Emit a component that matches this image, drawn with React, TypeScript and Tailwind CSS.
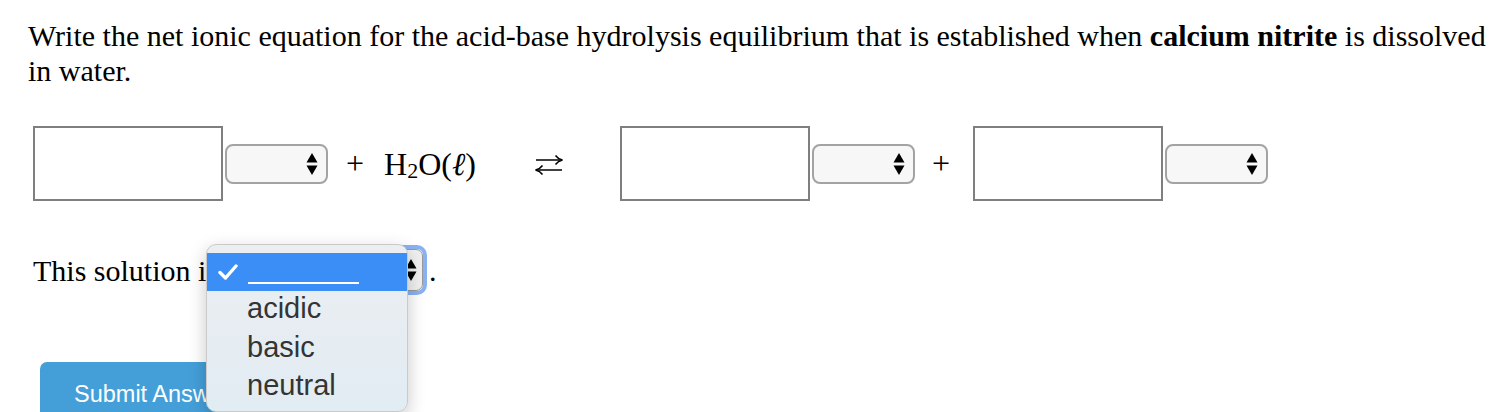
import React from 'react'

const serif = { fontFamily: '"Liberation Serif", "Times New Roman", serif' }
const sans = { fontFamily: '"Liberation Sans", Arial, sans-serif' }

function Arrows() {
  return (
    <svg width="12" height="24" viewBox="0 0 12 24" className="block">
      <path d="M6 1 L11.5 10.5 L0.5 10.5 Z" fill="#000" />
      <path d="M6 23 L11.5 13.5 L0.5 13.5 Z" fill="#000" />
    </svg>
  )
}

function StateSelect() {
  return (
    <div className="flex h-[40px] w-[103px] items-center justify-end rounded-[8px] border-2 border-[#a3a3a3] bg-[#f7f7f7] pr-[8px]">
      <Arrows />
    </div>
  )
}

function EntryBox() {
  return <div className="h-[75px] w-[190px] border-2 border-[#7f7f7f] bg-white" />
}

function Plus() {
  return <span className="text-[32px] leading-none">+</span>
}

function Equilibrium() {
  return (
    <svg width="30" height="22" viewBox="0 0 30 22" className="block">
      <path d="M2 6 H27" stroke="#000" strokeWidth="1.5" fill="none" />
      <path d="M21.5 1.5 Q24 5 28.5 6 Q24 7 21.5 10.5" stroke="#000" strokeWidth="1.5" fill="none" />
      <path d="M28 16 H3" stroke="#000" strokeWidth="1.5" fill="none" />
      <path d="M8.5 11.5 Q6 15 1.5 16 Q6 17 8.5 20.5" stroke="#000" strokeWidth="1.5" fill="none" />
    </svg>
  )
}

export default function App() {
  return (
    <div className="relative h-[412px] w-[1496px] overflow-hidden bg-white text-black" style={serif}>
      <p className="pl-[28px] pt-[18px] pr-[8px] text-[30px] leading-[35px]">
        Write the net ionic equation for the acid-base hydrolysis equilibrium that is established when{' '}
        <b>calcium nitrite</b> is dissolved in water.
      </p>

      {/* equation row */}
      <div className="mt-[38px] flex items-center pl-[33px]">
        <EntryBox />
        <div className="ml-[2px]">
          <StateSelect />
        </div>
        <span className="ml-[18px]">
          <Plus />
        </span>
        <span className="ml-[20px] text-[32px] leading-none">
          H<sub className="relative top-[3px] text-[22px]">2</sub>O(<i>ℓ</i>)
        </span>
        <span className="ml-[58px] mt-[2px]">
          <Equilibrium />
        </span>
        <div className="ml-[56px]">
          <EntryBox />
        </div>
        <div className="ml-[2px]">
          <StateSelect />
        </div>
        <span className="ml-[17px]">
          <Plus />
        </span>
        <div className="ml-[23px]">
          <EntryBox />
        </div>
        <div className="ml-[2px]">
          <StateSelect />
        </div>
      </div>

      {/* acidity row */}
      <div className="mt-[44px] flex items-center pl-[33px] text-[30px]">
        <span>This solution is</span>
        <div className="relative ml-[6px] rounded-[10px] border-[4px] border-[#8ab2f2]">
          <div className="flex h-[42px] w-[195px] items-center justify-end rounded-[7px] border border-[#9a9a9a] bg-[#f0f0f0] pr-[5px]">
            <Arrows />
          </div>
          {/* open menu */}
          <div
            className="absolute left-[-22px] top-[-5px] z-10 h-[168px] w-[202px] overflow-hidden rounded-[10px] border border-[#cacaca] bg-gradient-to-b from-[#eceef1] to-[#e1ecf3] shadow-[0_6px_18px_rgba(0,0,0,0.22)]"
            style={sans}
          >
            <div className="mt-[8px] flex h-[38px] items-center bg-[#3a8ef5] pl-[11px]">
              <svg width="20" height="16" viewBox="0 0 20 16" className="block">
                <path d="M2 8.5 L7.5 14 L18 2" stroke="#fff" strokeWidth="3.4" fill="none" strokeLinecap="round" strokeLinejoin="round" />
              </svg>
              <div className="ml-[10px] mt-[22px] h-[2px] w-[111px] bg-white" />
            </div>
            <div className="pl-[40px] text-[29px] leading-[38.5px] text-[#343434]">
              <div className="mt-[-2px]">acidic</div>
              <div>basic</div>
              <div>neutral</div>
            </div>
          </div>
        </div>
        <span className="ml-[2px]">.</span>
      </div>

      <button
        className="absolute left-[40px] top-[362px] h-[60px] w-[220px] rounded-[7px] bg-[#449fd9] pl-[34px] text-left text-[23.5px] text-white"
        style={sans}
      >
        <span className="relative top-[3px]">Submit Answer</span>
      </button>
    </div>
  )
}
